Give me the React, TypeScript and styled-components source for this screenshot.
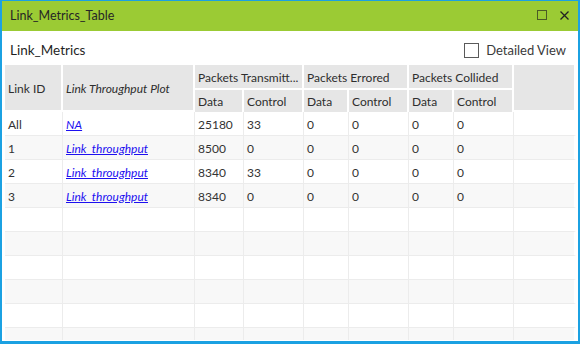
import styled, {createGlobalStyle} from "styled-components";

const GlobalStyle = createGlobalStyle`
    html, body {
        margin: 0;
        padding: 0;
        background: #ffffff;
    }
    body {
        font-family: "Lato", "Open Sans", sans-serif;
    }
`

/*Outer window with the blue frame*/
const StyledWindow = styled.div`
    width: 580px;
    height: 344px;
    box-sizing: border-box;
    border-style: solid;
    border-color: #1ba1e2;
    border-width: 1px 2px 3px 2px;
    background: #ffffff;
    display: flex;
    flex-direction: column;
    overflow: hidden;
`

const StyledTitleBar = styled.div`
    height: 30px;
    flex: none;
    background: #9bcb34;
    display: flex;
    align-items: center;
    padding: 0 9px 0 8px;
    color: #262626;
    font-size: 12.5px;
`

const StyledTitle = styled.span`
    flex: 1;
    padding-bottom: 1px;
`

const StyledControls = styled.div`
    display: flex;
    align-items: center;
    gap: 13px;
    padding-bottom: 2px;
`

const StyledMax = styled.div`
    width: 8px;
    height: 8px;
    border: 1px solid #4b5b26;
`

const StyledToolbar = styled.div`
    height: 34px;
    flex: none;
    box-sizing: border-box;
    display: flex;
    align-items: center;
    justify-content: space-between;
    padding: 3px 12px 0 8px;
`

const StyledHeading = styled.h3`
    margin: 0;
    font-weight: normal;
    font-size: 13.5px;
    color: #1f1f1f;
`

const StyledLabel = styled.label`
    display: flex;
    align-items: center;
    gap: 7px;
    font-size: 13px;
    color: #3a3a3a;
    padding-top: 1px;
`

const StyledBox = styled.span`
    width: 13px;
    height: 13px;
    border: 1px solid #5a5a5a;
    background: #ffffff;
`

const StyledTableWrap = styled.div`
    flex: 1;
    overflow: hidden;
    margin: 0 0 1px 3px;
`

const StyledTable = styled.table`
    width: 571px;
    table-layout: fixed;
    border-collapse: separate;
    border-spacing: 0;
    font-size: 12px;
    color: #333333;
`

const StyledTh = styled.th<{$italic?: boolean}>`
    background: #e6e6e6;
    font-weight: normal;
    font-style: ${p => p.$italic ? "italic" : "normal"};
    text-align: left;
    padding: 1px 0 0 3px;
    border-right: 2px solid #ffffff;
    border-bottom: 2px solid #ffffff;
    white-space: nowrap;
    overflow: hidden;
    text-overflow: ellipsis;
    color: #2e2e2e;
`

const StyledTopRow = styled.tr`
    height: 25px;
`

const StyledSubRow = styled.tr`
    height: 22px;
    th {
        border-bottom: none;
    }
`

const StyledRow = styled.tr<{$odd: boolean}>`
    height: 24px;
    background: ${p => p.$odd ? "#f8f8f8" : "#ffffff"};
`

const StyledTd = styled.td`
    padding: 1px 0 0 3px;
    border-right: 1px solid #ececec;
    border-bottom: 1px solid #ececec;
    white-space: nowrap;
    overflow: hidden;
    &:last-child {
        border-right: 2px solid #ffffff;
    }
`

const StyledLink = styled.a`
    color: #1d10f0;
    font-style: italic;
    text-decoration: underline;
`

const widths = [58, 132, 49, 60, 45, 60, 45, 60, 62];

const rows = [
    {id: "All", plot: "NA", values: ["25180", "33", "0", "0", "0", "0"]},
    {id: "1", plot: "Link_throughput", values: ["8500", "0", "0", "0", "0", "0"]},
    {id: "2", plot: "Link_throughput", values: ["8340", "33", "0", "0", "0", "0"]},
    {id: "3", plot: "Link_throughput", values: ["8340", "0", "0", "0", "0", "0"]},
];

export default function App() {
    const blanks = 6;

    return (
        <StyledWindow>
            <GlobalStyle/>
            <StyledTitleBar>
                <StyledTitle>Link_Metrics_Table</StyledTitle>
                <StyledControls>
                    <StyledMax/>
                    <svg width="9" height="9" viewBox="0 0 9 9">
                        <path d="M0.5 0.5 L8.5 8.5 M8.5 0.5 L0.5 8.5" stroke="#222" strokeWidth="1.3" fill="none"/>
                    </svg>
                </StyledControls>
            </StyledTitleBar>
            <StyledToolbar>
                <StyledHeading>Link_Metrics</StyledHeading>
                <StyledLabel>
                    <StyledBox/>
                    Detailed View
                </StyledLabel>
            </StyledToolbar>
            <StyledTableWrap>
                <StyledTable>
                    <colgroup>
                        {widths.map((w, i) => <col key={i} style={{width: w}}/>)}
                    </colgroup>
                    <thead>
                        <StyledTopRow>
                            <StyledTh rowSpan={2}>Link ID</StyledTh>
                            <StyledTh rowSpan={2} $italic>Link Throughput Plot</StyledTh>
                            <StyledTh colSpan={2}>Packets Transmitt...</StyledTh>
                            <StyledTh colSpan={2}>Packets Errored</StyledTh>
                            <StyledTh colSpan={2}>Packets Collided</StyledTh>
                            <StyledTh rowSpan={2}></StyledTh>
                        </StyledTopRow>
                        <StyledSubRow>
                            <StyledTh>Data</StyledTh>
                            <StyledTh>Control</StyledTh>
                            <StyledTh>Data</StyledTh>
                            <StyledTh>Control</StyledTh>
                            <StyledTh>Data</StyledTh>
                            <StyledTh>Control</StyledTh>
                        </StyledSubRow>
                    </thead>
                    <tbody>
                        {rows.map((r, i) => (
                            <StyledRow key={r.id} $odd={i % 2 === 1}>
                                <StyledTd>{r.id}</StyledTd>
                                <StyledTd><StyledLink href="#">{r.plot}</StyledLink></StyledTd>
                                {r.values.map((v, j) => <StyledTd key={j}>{v}</StyledTd>)}
                                <StyledTd></StyledTd>
                            </StyledRow>
                        ))}
                        {Array.from({length: blanks}).map((_, i) => (
                            <StyledRow key={"b" + i} $odd={(i + rows.length) % 2 === 1}>
                                {widths.map((_, j) => <StyledTd key={j}></StyledTd>)}
                            </StyledRow>
                        ))}
                    </tbody>
                </StyledTable>
            </StyledTableWrap>
        </StyledWindow>
    );
}
